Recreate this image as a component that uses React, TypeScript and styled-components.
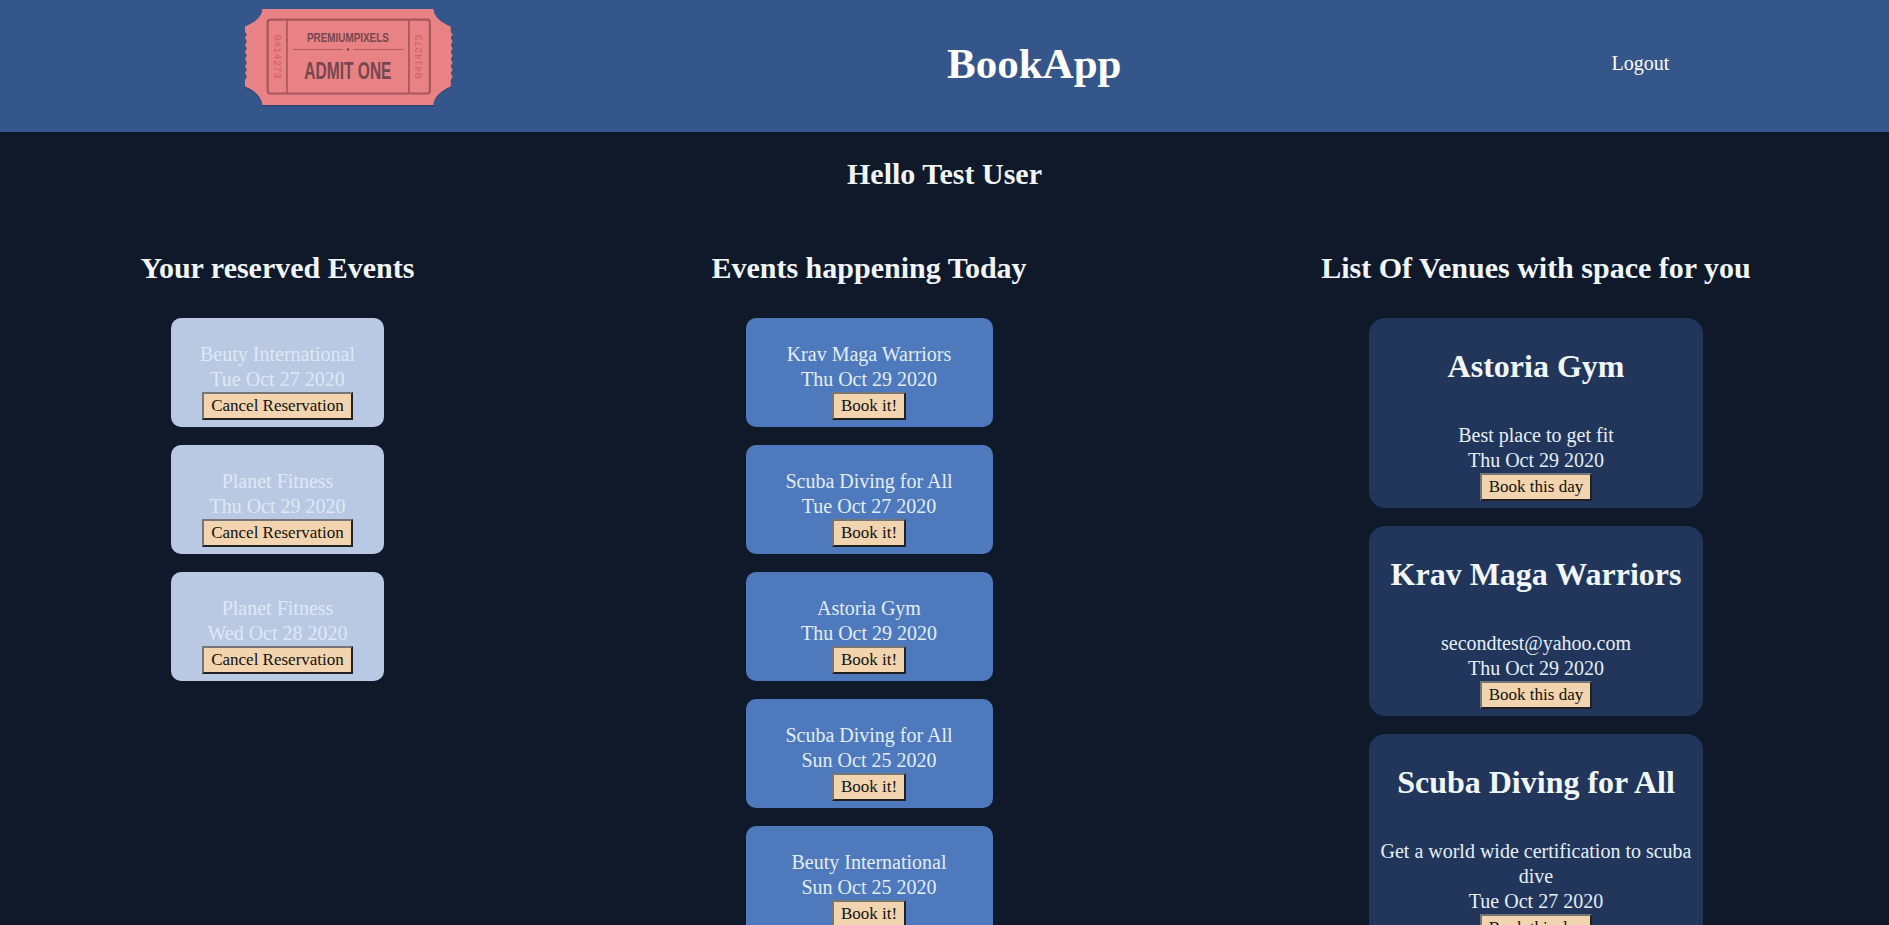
import styled, { createGlobalStyle } from "styled-components";

const reserved = [
  { name: "Beuty International", date: "Tue Oct 27 2020" },
  { name: "Planet Fitness", date: "Thu Oct 29 2020" },
  { name: "Planet Fitness", date: "Wed Oct 28 2020" },
];

const today = [
  { name: "Krav Maga Warriors", date: "Thu Oct 29 2020" },
  { name: "Scuba Diving for All", date: "Tue Oct 27 2020" },
  { name: "Astoria Gym", date: "Thu Oct 29 2020" },
  { name: "Scuba Diving for All", date: "Sun Oct 25 2020" },
  { name: "Beuty International", date: "Sun Oct 25 2020" },
];

const venues = [
  { name: "Astoria Gym", about: "Best place to get fit", date: "Thu Oct 29 2020" },
  { name: "Krav Maga Warriors", about: "secondtest@yahoo.com", date: "Thu Oct 29 2020" },
  { name: "Scuba Diving for All", about: "Get a world wide certification to scuba dive", date: "Tue Oct 27 2020" },
];

function Ticket() {
  const edge = "M20 0 H216 C217 9 224 15 236 20 L236 26 L238 29 L236 33 L238 37 L236 41 L238 45 L236 49 L238 53 L236 57 L238 61 L236 65 L238 69 L236 73 L238 77 L236 81 L236 88 C224 93 217 100 216 109 H20 C19 100 12 93 0 88 L0 81 L2 77 L0 73 L2 69 L0 65 L2 61 L0 57 L2 53 L0 49 L2 45 L0 41 L2 37 L0 33 L2 29 L0 26 L0 20 C12 15 19 9 20 0 Z";
  return (
    <TicketSvg viewBox="-4 -4 214 108" width="214" height="108">
      <g transform="scale(0.872 0.88)">
        <path d={edge} fill="#244068" opacity="0.55" transform="translate(0 2)" />
        <path d={edge} fill="#e98284" />
        <rect x="26" y="12" width="186" height="84" rx="3" fill="none" stroke="#a9565c" strokeWidth="2.5" />
        <line x1="48" y1="12" x2="48" y2="96" stroke="#a9565c" strokeWidth="2" />
        <line x1="188" y1="12" x2="188" y2="96" stroke="#a9565c" strokeWidth="2" />
        <line x1="55" y1="46" x2="112" y2="46" stroke="#a9565c" />
        <line x1="124" y1="46" x2="182" y2="46" stroke="#a9565c" />
        <circle cx="118" cy="46" r="1.5" fill="#7d4a52" />
        <TicketText x="118" y="38" fontSize="15" textLength="94" lengthAdjust="spacingAndGlyphs">PREMIUMPIXELS</TicketText>
        <TicketText x="118" y="79" fontSize="27" textLength="100" lengthAdjust="spacingAndGlyphs">ADMIT ONE</TicketText>
        <TicketSerial transform="translate(33 54) rotate(90)" fontSize="12">0414273</TicketSerial>
        <TicketSerial transform="translate(203 54) rotate(-90)" fontSize="12">0414273</TicketSerial>
      </g>
    </TicketSvg>
  );
}

export default function App() {
  return (
    <>
      <GlobalStyle />
      <Page>
        <Header>
          <Ticket />
          <Brand>BookApp</Brand>
          <LogoutLink>Logout</LogoutLink>
        </Header>
        <Greeting>Hello Test User</Greeting>
        <Columns>
          <Column $width={266}>
            <ColumnTitle>Your reserved Events</ColumnTitle>
            {reserved.map((item, i) => (
              <EventCard key={i} $width={213} $bg="#b9c9e3" $fg="#dfe8f6">
                <div>{item.name}</div>
                <div>{item.date}</div>
                <ActionButton>Cancel Reservation</ActionButton>
              </EventCard>
            ))}
          </Column>
          <Column $width={309}>
            <ColumnTitle>Events happening Today</ColumnTitle>
            {today.map((item, i) => (
              <EventCard key={i} $width={247} $bg="#4e79bc" $fg="#e3eefb">
                <div>{item.name}</div>
                <div>{item.date}</div>
                <ActionButton>Book it!</ActionButton>
              </EventCard>
            ))}
          </Column>
          <Column $width={417}>
            <ColumnTitle>List Of Venues with space for you</ColumnTitle>
            {venues.map((item, i) => (
              <VenueCard key={i}>
                <VenueName>{item.name}</VenueName>
                <div>{item.about}</div>
                <div>{item.date}</div>
                <ActionButton>Book this day</ActionButton>
              </VenueCard>
            ))}
          </Column>
        </Columns>
      </Page>
    </>
  );
}

const GlobalStyle = createGlobalStyle`
  html, body {
    margin: 0;
    padding: 0;
    background: #0f192a;
  }
  body {
    font-family: "Liberation Serif", serif;
    color: #f1f6fd;
  }
`;

const Page = styled.div`
  height: 100vh;
  overflow: hidden;
  background: #0f192a;
`;

const Header = styled.header`
  height: 132px;
  background: #34568b;
  display: flex;
  align-items: flex-start;
  padding-left: 241px;
  color: #fff;
`;

const TicketSvg = styled.svg`
  display: block;
  margin-top: 5px;
  flex: none;
`;

const TicketText = styled.text`
  font-family: "Liberation Sans", sans-serif;
  font-weight: 700;
  fill: #75474f;
  text-anchor: middle;
`;

const TicketSerial = styled.text`
  font-family: "Liberation Mono", monospace;
  fill: #c9606a;
  text-anchor: middle;
`;

const Brand = styled.div`
  margin-left: 492px;
  margin-top: 39px;
  font-size: 43px;
  line-height: 50px;
  font-weight: 700;
`;

const LogoutLink = styled.a`
  margin-left: 490px;
  margin-top: 51px;
  font-size: 20px;
  line-height: 24px;
`;

const Greeting = styled.h2`
  margin: 24px 0 0;
  text-align: center;
  font-size: 30px;
  line-height: 36px;
  font-weight: 700;
`;

const Columns = styled.div`
  display: flex;
  justify-content: center;
  gap: 304px;
  margin-top: 58px;
`;

const Column = styled.section<{ $width: number }>`
  width: ${(p) => p.$width}px;
  flex: none;
  display: flex;
  flex-direction: column;
  align-items: center;
`;

const ColumnTitle = styled.h3`
  margin: 0 0 32px;
  white-space: nowrap;
  font-size: 30px;
  line-height: 36px;
  font-weight: 700;
`;

const EventCard = styled.div<{ $width: number; $bg: string; $fg: string }>`
  width: ${(p) => p.$width}px;
  box-sizing: border-box;
  margin-bottom: 18px;
  padding: 24px 0 7px;
  border-radius: 10px;
  background: ${(p) => p.$bg};
  color: ${(p) => p.$fg};
  text-align: center;
  font-size: 20px;
  line-height: 25px;
`;

const VenueCard = styled.div`
  width: 334px;
  box-sizing: border-box;
  margin-bottom: 18px;
  padding: 24px 6px 7px;
  border-radius: 16px;
  background: #21365a;
  color: #e6effb;
  text-align: center;
  font-size: 20px;
  line-height: 25px;
`;

const VenueName = styled.h2`
  margin: 0 0 33px;
  color: #f1f6fd;
  font-size: 32px;
  line-height: 48px;
  font-weight: 700;
`;

const ActionButton = styled.button`
  display: block;
  margin: 0 auto;
  padding: 0 7px;
  height: 28px;
  box-sizing: border-box;
  border: 2px outset #767676;
  background: #f2d4ae;
  color: #111;
  font-family: inherit;
  font-size: 17px;
  line-height: 22px;
`;
